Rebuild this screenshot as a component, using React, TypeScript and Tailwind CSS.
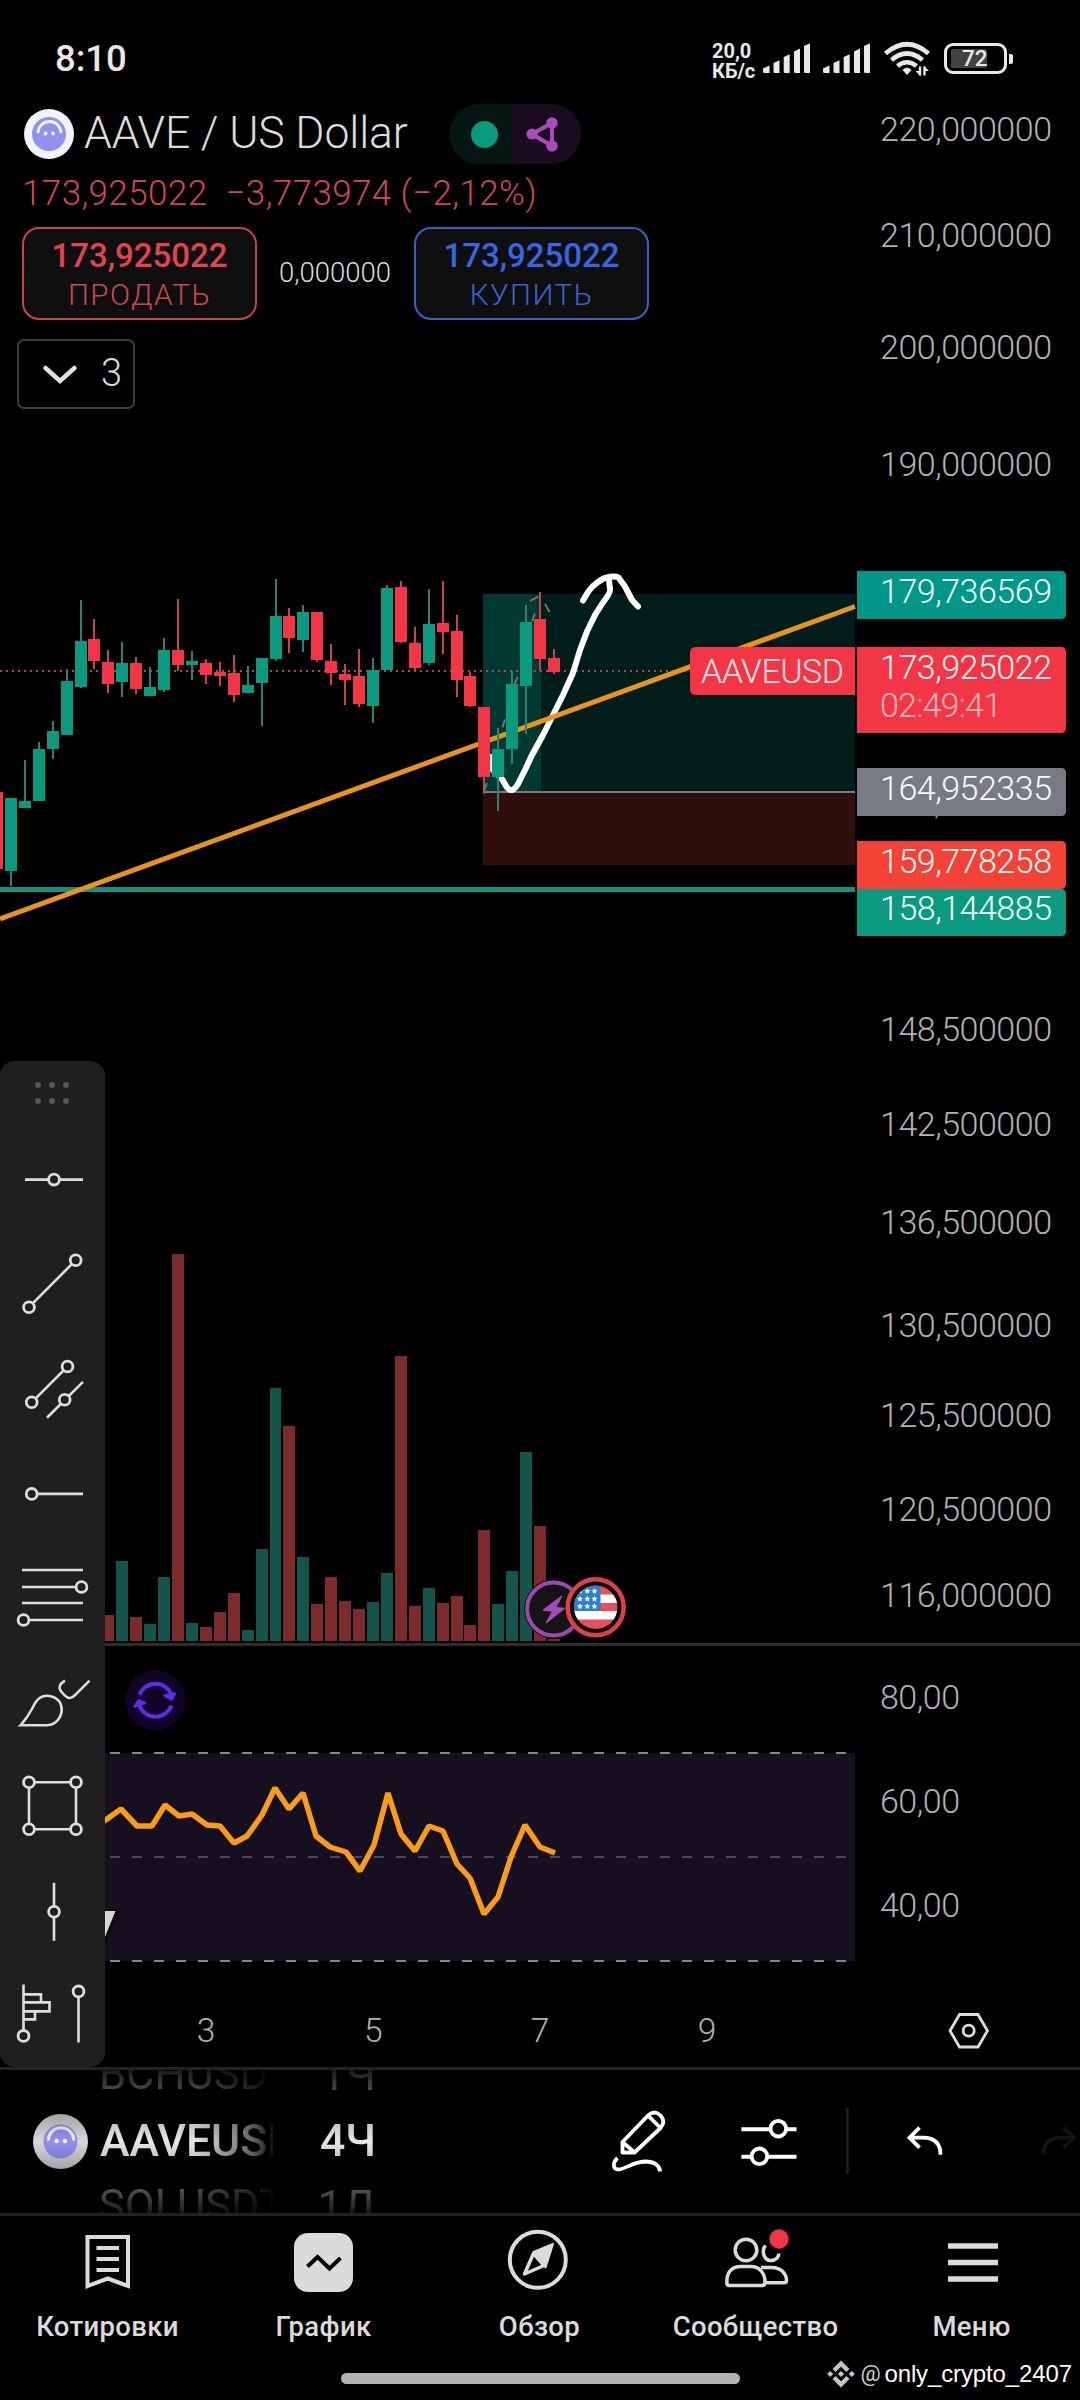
import React from "react";

type Dir = "g" | "r";
const CANDLE: Record<Dir, string> = { g: "#0b9a80", r: "#f23645" };
const WICK: Record<Dir, string> = { g: "#2f8071", r: "#c9434d" };
const VOLUME: Record<Dir, string> = { g: "#14544c", r: "#7b2b2c" };

// center x, direction, wick top, body top, body bottom, wick bottom
const candles: [number, Dir, number, number, number, number][] = [
  [-3, "r", 792, 792, 869, 869],
  [11, "g", 798, 798, 871, 886],
  [25, "g", 760, 801, 808, 808],
  [39, "g", 742, 749, 801, 801],
  [53, "g", 721, 731, 749, 759],
  [67, "g", 669, 681, 735, 735],
  [81, "g", 600, 641, 687, 688],
  [94, "r", 619, 639, 661, 669],
  [108, "r", 650, 662, 684, 693],
  [122, "g", 642, 663, 682, 697],
  [136, "r", 657, 663, 689, 694],
  [150, "g", 667, 687, 696, 696],
  [164, "g", 638, 650, 690, 692],
  [178, "r", 599, 650, 665, 671],
  [192, "g", 651, 661, 665, 680],
  [206, "r", 659, 663, 675, 684],
  [220, "r", 662, 672, 676, 686],
  [234, "r", 655, 673, 695, 702],
  [248, "g", 666, 685, 693, 693],
  [262, "g", 658, 658, 683, 726],
  [276, "g", 579, 616, 659, 661],
  [289, "r", 608, 616, 638, 653],
  [303, "g", 605, 612, 640, 652],
  [317, "r", 612, 612, 660, 662],
  [331, "r", 644, 661, 673, 685],
  [345, "r", 664, 674, 680, 705],
  [359, "r", 649, 676, 704, 707],
  [373, "g", 658, 670, 706, 723],
  [387, "g", 585, 588, 670, 670],
  [401, "r", 581, 587, 642, 643],
  [415, "r", 627, 643, 668, 670],
  [429, "g", 589, 624, 663, 665],
  [443, "r", 581, 623, 632, 654],
  [457, "r", 615, 631, 680, 697],
  [470, "r", 672, 676, 706, 707],
  [484, "r", 707, 707, 777, 794],
  [498, "g", 728, 749, 777, 811],
  [512, "g", 671, 684, 749, 764],
  [526, "g", 605, 622, 686, 734],
  [540, "r", 592, 619, 659, 671],
  [554, "r", 649, 658, 672, 674],
];

const volumes: [number, Dir, number][] = [
  [108, "r", 1615], [122, "g", 1561], [136, "r", 1617], [150, "g", 1624], [164, "g", 1577],
  [178, "r", 1254], [192, "g", 1623], [206, "r", 1627], [220, "r", 1612], [234, "r", 1593],
  [248, "g", 1630], [262, "g", 1549], [276, "g", 1388], [289, "r", 1426], [303, "g", 1557],
  [317, "r", 1604], [331, "r", 1577], [345, "r", 1601], [359, "r", 1609], [373, "g", 1602],
  [387, "g", 1573], [401, "r", 1356], [415, "r", 1606], [429, "g", 1588], [443, "r", 1603],
  [457, "r", 1596], [470, "r", 1625], [484, "r", 1530], [498, "g", 1604], [512, "g", 1571],
  [526, "g", 1452], [540, "r", 1526], [554, "r", 1639],
];

const prices: [string, number][] = [
  ["220,000000", 129], ["210,000000", 235], ["200,000000", 347], ["190,000000", 464],
  ["148,500000", 1029], ["142,500000", 1124], ["136,500000", 1222], ["130,500000", 1325],
  ["125,500000", 1415], ["120,500000", 1508.5], ["116,000000", 1595],
];

const tags: [string, string, number, number, number][] = [
  ["179,736569", "#009688", 571, 48, 591],
  ["173,925022", "#f23645", 647, 86, 667],
  ["164,952335", "#787b86", 768, 48, 788],
  ["159,778258", "#f44336", 841, 48, 861],
  ["158,144885", "#0b9a80", 889, 47, 908],
];

const rsi =
  "100,1824 107,1819 121,1809 137,1826 152,1826 165,1805 179,1816 192,1814 207,1825 220,1826 234,1843 247,1836 262,1815 275,1788 289,1809 303,1793 316,1836 330,1847 346,1852 360,1871 374,1845 388,1793 401,1834 415,1851 429,1826 443,1831 457,1864 470,1878 484,1914 498,1897 511,1857 525,1825 540,1847 555,1853";

function AxisText({ x, cy, w, children, fill = "#b2b2b2", size = 34 }: {
  x: number; cy: number; w: number; children: string; fill?: string; size?: number;
}) {
  return (
    <text x={x} y={cy + size * 0.356} fontSize={size} fill={fill} textLength={w} className="font-light">
      {children}
    </text>
  );
}

function AaveLogo({ size, r, rim }: { size: number; r: number; rim: string }) {
  return (
    <svg width={size} height={size} viewBox="-25 -25 50 50" className="shrink-0">
      <circle r="25" fill={rim} />
      <circle r={r} fill="#9391f0" />
      <path d="M-11 -1 A11 11 0 0 1 12 -1" fill="none" stroke="#f4f4fb" strokeWidth="2.800" />
      <circle cx="-3.500" cy="-0.500" r="2" fill="#f4f4fb" />
      <circle cx="4" cy="-0.500" r="2" fill="#f4f4fb" />
    </svg>
  );
}

function Signal() {
  return (
    <svg width="48" height="31" viewBox="0 0 48 31" fill="#e8e8e8">
      <path d="M0 25.5 L6.5 22.5 V30 H1.5 Q0 30 0 28.5Z" />
      <path d="M10.5 20 L16.5 17.2 V30 H12 Q10.5 30 10.5 28.5Z" />
      <path d="M20.7 14 L26.7 11.2 V30 H22 Q20.7 30 20.7 28.5Z" />
      <path d="M31 8.5 L37 5.5 V30 H32.5 Q31 30 31 28.5Z" />
      <path d="M41 3 L47 0.2 V30 H42.5 Q41 30 41 28.5Z" />
    </svg>
  );
}

function StatusBar() {
  return (
    <div className="flex h-[104px] items-center pt-[13px] pr-[67px] pl-[55px] text-[#e8e8e8]">
      <span className="mt-[2px] text-[36.5px] leading-none font-medium">8:10</span>
      <div className="ml-auto flex items-center">
        <div className="mt-[4px] w-[51px] text-[20px] leading-[20px] font-bold whitespace-nowrap">
          <div>20,0</div>
          <div>КБ/с</div>
        </div>
        <Signal />
        <div className="w-3" />
        <Signal />
        <svg width="48" height="36" viewBox="881 40 48 36" className="ml-3" fill="none" stroke="#e8e8e8" strokeWidth="4.6">
          <path d="M883.5 52.5 Q905 34 926.500 52.5" />
          <path d="M889.5 59 Q905 46 920.500 59" />
          <path d="M895.500 65 Q905 57.500 914.500 65" />
          <path d="M900.5 69 Q905 64.5 909.500 69 L905 74Z" fill="#e8e8e8" stroke="none" />
          <path d="M918 65.500 V74.500 M922.500 65.500 V74.500" strokeWidth="2.400" />
          <path d="M913.500 70 L918.500 75 V70Z M927 70 L922 65 V70Z" fill="#e8e8e8" stroke="none" />
        </svg>
        <div className="ml-[13px] flex h-[31px] w-[63px] items-center rounded-[9px] border-[3px] border-[#e8e8e8] pl-1">
          <div className="flex h-[19px] w-[36px] items-center rounded-[2px] bg-[#424242] pl-[11px]">
            <span className="text-[22.5px] leading-none font-medium">72</span>
          </div>
        </div>
        <div className="ml-[2px] h-[10px] w-[4px] rounded-r-[2px] bg-[#e8e8e8]" />
      </div>
    </div>
  );
}

function Header() {
  return (
    <header className="relative">
      <StatusBar />
      <div className="flex h-[60px] items-center pl-6">
        <AaveLogo size={50} r={17} rim="#f3f3fb" />
        <h1 className="mt-[-2px] ml-[10px] w-[365px] text-[44.5px] leading-none font-light tracking-[-0.1px] whitespace-nowrap text-[#dcdcdc]">
          AAVE / US Dollar
        </h1>
        <div className="flex h-[60px] w-[132px] overflow-hidden rounded-[30px]">
          <div className="flex flex-1 items-center justify-center bg-[#041611] pl-[7px]">
            <span className="size-[27px] rounded-full bg-[#0b9a80]" />
          </div>
          <div className="flex flex-1 items-center bg-[#1b0b20] pl-[13px]">
            <svg width="34" height="36" viewBox="526 116 34 36" fill="#a84db8" stroke="#a84db8" strokeWidth="4">
              <path d="M533 134 L553 123 V146Z" fill="none" />
              <circle cx="533" cy="134" r="3.600" />
              <circle cx="553" cy="123" r="3.800" />
              <circle cx="553" cy="146" r="3.800" />
            </svg>
          </div>
        </div>
      </div>
      <div className="flex h-[58px] items-center gap-[18px] pl-[22px] text-[35px] leading-none font-light whitespace-nowrap text-[#cf4850]">
        <span className="tracking-[0.4px]">173,925022</span>
        <span className="tracking-[0.4px]">−3,773974 (−2,12%)</span>
      </div>
      <div className="mt-[5px] flex h-[93px] items-center pl-[22px]">
        <button className="flex h-full w-[235px] flex-col items-center rounded-[17px] border-2 border-[#c9434d] bg-[#0f0f0f] pt-[7px]">
          <span className="text-[33px] leading-[39px] font-medium text-[#e0444f]">173,925022</span>
          <span className="text-[29.5px] leading-[40px] font-light tracking-[1.5px] text-[#cf4850]">ПРОДАТЬ</span>
        </button>
        <span className="w-[157px] pr-[1px] pb-[2px] text-center text-[27.5px] leading-none font-light text-[#dcdcdc]">0,000000</span>
        <button className="flex h-full w-[235px] flex-col items-center rounded-[17px] border-2 border-[#3a5fc4] bg-[#0f0f0f] pt-[7px]">
          <span className="text-[33px] leading-[39px] font-medium text-[#3666e3]">173,925022</span>
          <span className="text-[29.5px] leading-[40px] font-light tracking-[1.5px] text-[#3c63d4]">КУПИТЬ</span>
        </button>
      </div>
      <button className="mt-[19px] ml-[17px] flex h-[70px] w-[118px] items-center rounded-[7px] border-2 border-[#3c3c3c] pl-[23px]">
        <svg width="36" height="22" viewBox="0 0 36 22" fill="none" stroke="#e0e0e0" strokeWidth="4.5">
          <path d="M3.500 5 L18 18 L32.500 5" strokeLinecap="round" />
        </svg>
        <span className="mt-[-3px] ml-[23px] text-[38px] leading-none font-light text-[#dcdcdc]">3</span>
      </button>
    </header>
  );
}

function PriceChart() {
  return (
    <svg className="absolute inset-0" width="1080" height="1643" viewBox="0 0 1080 1643">
      <rect x="483" y="594" width="372" height="198" fill="#011d19" />
      <rect x="483" y="594" width="58" height="198" fill="#013831" />
      <rect x="483" y="793" width="372" height="72" fill="#300e0c" />
      <rect x="483" y="791" width="372" height="2" fill="#787b86" />
      <path d="M0 671 H690" stroke="#b0454c" strokeWidth="2" strokeDasharray="2 4" />
      <path
        d="M490 757 L491 768 L502 779 L507 787.500 Q512 794 518 784 L525 770 L532 755 L543 735 L552 717 L563 695 L573 673 L580 650 L587 631.500 L595 615 L603 602.500 Q611 592 610 589 L609 580 M583 600.500 L588 592 Q592 586 598 582 Q604 577.500 610 576.800 Q616 576 618.500 577.500 L625 586.500 L632 600 L638 606.500"
        fill="none" stroke="#fff" strokeWidth="6" strokeLinecap="round" strokeLinejoin="round"
      />
      <rect x="0" y="887" width="855" height="5" fill="#188f7e" />
      <path d="M0 919 L855 606.500" stroke="#e8931b" strokeWidth="5" />
      {candles.map(([x, d, wt, bt, bb, wb]) => (
        <g key={x}>
          <rect x={x - 1} y={wt} width="2" height={wb - wt} fill={WICK[d]} />
          <rect x={x - 6} y={bt} width="12" height={bb - bt} fill={CANDLE[d]} />
        </g>
      ))}
      <path
        d="M484 791.500 L487 783 M502.500 727.500 L505 719.500 M514.500 684.500 L517.500 677 M532 621.500 L535 613.500 M530 601 L538.500 596.500 M545 604 L549.500 612"
        stroke="#6f7f7c" strokeWidth="1.800"
      />
      {volumes.map(([x, d, t]) => (
        <rect key={x} x={x - 6} y={t} width={x === 276 ? 11 : 12} height={1641 - t} fill={VOLUME[d]} />
      ))}
      <path d="M690 653 Q690 647 696 647 H855 V695 H696 Q690 695 690 689Z" fill="#f23645" />
      <AxisText x={701} cy={671} w={143} fill="#fbe6e8">AAVEUSD</AxisText>
      {prices.map(([t, y]) => (
        <AxisText key={t} x={880} cy={y} w={172}>{t}</AxisText>
      ))}
      <path d="M937 816 L936 818" stroke="#888" strokeWidth="2" />
      {tags.map(([t, c, y, h, cy]) => (
        <g key={t}>
          <path d={`M857 ${y} H1061 Q1066 ${y} 1066 ${y + 5} V${y + h - 5} Q1066 ${y + h} 1061 ${y + h} H857Z`} fill={c} />
          <AxisText x={880} cy={cy} w={172} fill="#f4fbfa">{t}</AxisText>
        </g>
      ))}
      <AxisText x={880} cy={705} w={122} fill="#fbb9be">02:49:41</AxisText>
      <g>
        <circle cx="553.6" cy="1609" r="29.500" fill="#0a0a0a" />
        <circle cx="553.6" cy="1609" r="26.500" fill="#141414" stroke="#9c48b2" strokeWidth="4" />
        <path d="M561.500 1596.500 L543.500 1610 L553 1611 L546.500 1622.500 L564 1608.500 L555.500 1607.500Z" fill="#a44db8" stroke="#a44db8" strokeWidth="1.500" strokeLinejoin="round" />
        <circle cx="595.7" cy="1607.300" r="28" fill="#0c0c0c" stroke="#de404b" strokeWidth="4.500" />
        <clipPath id="flag"><circle cx="595.7" cy="1607.300" r="21.700" /></clipPath>
        <g clipPath="url(#flag)">
          <rect x="573" y="1585" width="46" height="46" fill="#ea4f55" />
          <rect x="573" y="1594.500" width="46" height="8.500" fill="#fff" />
          <rect x="573" y="1611" width="46" height="8.500" fill="#fff" />
          <rect x="573" y="1585" width="27.500" height="26" fill="#2a7fd4" />
          {[1591, 1598.700, 1606.200].map((y) =>
            [580, 587.300, 594.500].map((x) => (
              <path key={`${x}-${y}`} d={`M${x} ${y - 3} l1 2 2 .3 -1.500 1.400 .4 2.100 -1.900 -1 -1.900 1 .4 -2.100 -1.500 -1.400 2 -.3Z`} fill="#e6f4ff" />
            )),
          )}
        </g>
      </g>
    </svg>
  );
}

function RsiPane() {
  return (
    <svg width="1080" height="421" viewBox="0 1646 1080 421" className="block">
      <circle cx="155.300" cy="1700.300" r="30" fill="#0f0428" />
      <g fill="none" stroke="#5f2ce6" strokeWidth="4">
        <path d="M139.500 1695 A17 17 0 0 1 171.500 1695" />
        <path d="M171.500 1705.500 A17 17 0 0 1 139.500 1705.500" />
        <path d="M164.500 1695.500 L171.500 1699.500 L175 1693.500Z M134.500 1706.500 L138.500 1700.500 L145 1703Z" fill="#5f2ce6" strokeWidth="2.500" strokeLinejoin="round" />
      </g>
      <rect x="0" y="1753" width="855" height="208" fill="#160f20" />
      <path d="M110 1753 H848" stroke="#85838a" strokeWidth="2" strokeDasharray="10 12" />
      <path d="M110 1857 H848" stroke="#4c4755" strokeWidth="2" strokeDasharray="10 12" />
      <path d="M110 1961 H848" stroke="#85838a" strokeWidth="2" strokeDasharray="10 12" />
      <path d="M100 1909 H120 L105 1945Z" fill="#0a0a0a" />
      <path d="M100 1911 H115.500 L105 1937Z" fill="#d6d6d6" />
      <polyline points={rsi} fill="none" stroke="#fb9c17" strokeWidth="5.500" strokeLinejoin="bevel" />
      <AxisText x={880} cy={1697} w={80}>80,00</AxisText>
      <AxisText x={880} cy={1801} w={80}>60,00</AxisText>
      <AxisText x={880} cy={1905} w={80}>40,00</AxisText>
      {[["3", 206], ["5", 373.2], ["7", 540], ["9", 707]].map(([t, x]) => (
        <text key={t} x={x} y="2042" fontSize="33.500" fill="#b2b2b2" textAnchor="middle" className="font-light">{t}</text>
      ))}
      <path d="M959.500 2014.500 H978 L987.500 2030.700 L978 2047 H959.500 L950 2030.700Z" fill="none" stroke="#dcdcdc" strokeWidth="2.800" />
      <circle cx="968.700" cy="2030.700" r="5.500" fill="none" stroke="#dcdcdc" strokeWidth="2.800" />
    </svg>
  );
}

const Dot = ({ x, y }: { x: number; y: number }) => <circle cx={x} cy={y} r="5.400" fill="#1f1f1f" strokeWidth="2.800" />;

const tools: React.ReactNode[] = [
  <><path d="M25 1180 H83" /><Dot x={54} y={1180} /></>,
  <><path d="M29 1307 L75.700 1260" /><Dot x={29} y={1307} /><Dot x={75.7} y={1260} /></>,
  <><path d="M31.700 1402.500 L67.500 1366.700 M47 1418 L83 1382" /><Dot x={31.7} y={1402.5} /><Dot x={67.5} y={1366.7} /><Dot x={64.7} y={1400} /></>,
  <><path d="M32 1493.500 H83" /><Dot x={31.7} y={1493.5} /></>,
  <><path d="M22 1570 H83 M22 1587 H82 M22 1603 H83 M24 1620 H83" /><Dot x={81.5} y={1587} /><Dot x={23.5} y={1620} /></>,
  <path d="M20.500 1725.700 C31 1714 31 1710 36 1702 C42 1692 61.500 1695 61.700 1710 C61.500 1719 55 1725.700 46 1725.700Z M65 1681 C55 1687 61 1692 65 1696 Q70 1701 75 1695.500 L89.500 1681" />,
  <><path d="M29 1782 H76 V1829 H29Z" /><Dot x={29} y={1782} /><Dot x={76} y={1782} /><Dot x={29} y={1829} /><Dot x={76} y={1829} /></>,
  <><path d="M54 1883 V1941" /><Dot x={54} y={1912} /></>,
  <><path d="M23.500 1984 V2035 M23.500 1994 H41 V2002 M23.500 2002 H49.500 V2011 H23.500 M35 2011 V2019 H23.500 M78.500 1991 V2042" /><Dot x={23.5} y={2035.5} /><Dot x={78.5} y={1991} /></>,
];

function DrawingToolbar() {
  return (
    <aside className="absolute top-[1061px] left-0 flex h-[1006px] w-[105px] flex-col rounded-[15px] bg-[#1f1f1f]">
      <div className="grid h-[66.400px] grid-cols-[6px_6px_6px] content-start gap-x-2 gap-y-[10px] pt-[21px] pl-[35px]">
        {Array.from({ length: 6 }, (_, i) => (
          <span key={i} className="size-[6px] rounded-full bg-[#555]" />
        ))}
      </div>
      {tools.map((icon, i) => (
        <svg key={i} width="105" height="104.4" viewBox={`0 ${1127.4 + i * 104.4} 105 104.4`} fill="none" stroke="#dedede" strokeWidth="2.600" className="shrink-0 overflow-visible">
          {icon}
        </svg>
      ))}
    </aside>
  );
}

function ActionBar() {
  return (
    <div className="flex h-[149px] items-center border-y-[3px] border-[#222]">
      <div className="flex h-[143px] w-[400px] items-center overflow-hidden pl-[33px] [mask-image:linear-gradient(to_bottom,rgba(0,0,0,0.15)_0%,rgba(0,0,0,0.75)_30%,#000_50%,rgba(0,0,0,0.75)_70%,rgba(0,0,0,0.15)_100%)]">
        <AaveLogo size={55} r={15.5} rim="#d8d8dc" />
        <div className="-mt-[2px] ml-[12px] flex w-[173px] flex-col overflow-hidden text-[44.500px] leading-[66px] whitespace-nowrap [mask-image:linear-gradient(to_right,#000_55%,rgba(0,0,0,0.45)_88%,rgba(0,0,0,0.08)_100%)]">
          <span className="-ml-px text-[43.500px] font-normal text-[#a8a8a8]">BCHUSD</span>
          <span className="font-medium text-[#e8e8e8]">AAVEUSD</span>
          <span className="-ml-px text-[43.500px] font-normal text-[#a8a8a8]">SOLUSDT</span>
        </div>
        <div className="-mt-[2px] flex w-[103px] flex-col text-right text-[44.500px] leading-[66px]">
          <span className="font-normal text-[#a8a8a8]">1Ч</span>
          <span className="font-medium text-[#e8e8e8]">4Ч</span>
          <span className="font-normal text-[#a8a8a8]">1Д</span>
        </div>
      </div>
      <svg width="680" height="143" viewBox="400 2070 680 143" fill="none" stroke="#fff" strokeWidth="3.800">
        <path d="M622.500 2152.500 V2142 L648 2115.500 Q654.500 2109.500 660.500 2115.500 Q666 2121.500 660.500 2128 L634.500 2152.500Z M622.500 2142 L634.500 2152.500 M648 2115.500 L660.500 2128" strokeLinejoin="round" />
        <path d="M617.500 2158 C612 2163 613 2169.500 618.500 2169.500 C626 2169 632 2162 645 2161.500 C655 2161.500 660 2166 660 2171.500" />
        <path d="M741.400 2129.300 H796.500 M741.400 2156.700 H796.500" strokeWidth="4" />
        <circle cx="778.300" cy="2128.700" r="7.800" fill="#000" />
        <circle cx="759.400" cy="2156.300" r="7.800" fill="#000" />
        <path d="M847.500 2108 V2174" stroke="#222" strokeWidth="2.500" />
        <path d="M919.500 2127.700 L909.500 2137.700 L919.500 2147.700 M909.500 2137.700 H923 Q940.500 2138 940.500 2154.700" />
        <path d="M1063.500 2127.700 L1073.500 2137.700 L1063.500 2147.700 M1073.500 2137.700 H1060 Q1043.500 2138 1043.500 2154.700" stroke="#131313" />
      </svg>
    </div>
  );
}

const navItems: [string, React.ReactNode][] = [
  ["Котировки", <><path d="M87.500 2237 H128 V2286 L107.700 2278.500 L87.500 2286Z" /><path d="M96.500 2248 H119 M96.500 2259 H119 M96.500 2270 H119" /></>],
  ["График", <><rect x="294" y="2233" width="59" height="59" rx="14" fill="#dbdbdb" stroke="none" /><path d="M307.500 2266.500 L317.500 2257 L329.500 2268.500 L340.500 2258" stroke="#000" /></>],
  ["Обзор", <><circle cx="537.800" cy="2259.800" r="28" /><path d="M553 2244 L533.500 2252 L545.500 2267.500Z" fill="#dbdbdb" strokeWidth="2" strokeLinejoin="round" /><path d="M533.500 2253.500 L524.500 2274 L544 2265.500Z" strokeWidth="3.500" strokeLinejoin="round" /></>],
  ["Сообщество", <><circle cx="746" cy="2250" r="10.800" strokeWidth="3.500" /><path d="M727 2284.500 C726 2273 731 2266.500 741 2266.500 H751 C760 2266.500 765 2274 765 2282 Q765 2285.500 762 2285.500 H729 Q727 2285.500 727 2283 M761 2267.500 H772 C781 2267.500 786.500 2274 786.500 2280.500 Q786.500 2282.700 784 2282.700 H765 M765.500 2245.500 C761 2251 764 2260.500 771 2260.500 C776 2260.500 779 2257 778.700 2253.500" strokeWidth="3.500" /><circle cx="779" cy="2239" r="9.700" fill="#f23645" stroke="none" /></>],
  ["Меню", <path d="M948 2246 H998 M948 2262.500 H998 M948 2279 H998" strokeWidth="5.500" />],
];

function BottomNav() {
  return (
    <nav className="relative h-[184px]">
      <div className="grid grid-cols-5 pt-[14px]">
        {navItems.map(([label, icon], i) => (
          <div key={label} className="flex flex-col items-center">
            <svg width="216" height="64" viewBox={`${216 * i} 2230 216 64`} fill="none" stroke="#dbdbdb" strokeWidth="4" className="overflow-visible">
              {icon}
            </svg>
            <span className="-ml-px text-[27.500px] leading-[65px] font-medium tracking-[0.35px] text-[#dbdbdb]">{label}</span>
          </div>
        ))}
      </div>
      <div className="mx-auto mt-[14px] h-[11px] w-[399px] rounded-full bg-[#b3b3b3]" />
      <div className="absolute right-[8px] bottom-[11px] flex h-[30px] items-center text-white">
        <svg width="28" height="28" viewBox="-14 -14 28 28" fill="#c4c4c4">
          <path d="M0 -13.500 L8.500 -5 L5.300 -1.900 L0 -7.200 L-5.300 -1.900 L-8.500 -5Z M0 13.500 L8.500 5 L5.300 1.900 L0 7.200 L-5.300 1.900 L-8.500 5Z M0 -3.100 L3.100 0 L0 3.100 L-3.100 0Z M-10.800 -3.100 L-7.700 0 L-10.800 3.100 L-13.900 0Z M10.800 -3.100 L13.900 0 L10.800 3.100 L7.700 0Z" />
        </svg>
        <span className="mt-[-2px] ml-[5px] w-[24px] text-[22.500px] leading-none text-[#d0d0d0]">@</span>
        <span className="font-['Liberation_Sans',Arial,sans-serif] text-[24px] leading-none tracking-[-0.12px]">only_crypto_2407</span>
      </div>
    </nav>
  );
}

export default function App() {
  return (
    <main className="relative flex h-[2400px] w-[1080px] flex-col overflow-hidden bg-black font-['Roboto',sans-serif]">
      <section className="relative h-[1646px] border-b-[3px] border-[#2e2e2e]">
        <PriceChart />
        <Header />
      </section>
      <RsiPane />
      <ActionBar />
      <BottomNav />
      <DrawingToolbar />
    </main>
  );
}
